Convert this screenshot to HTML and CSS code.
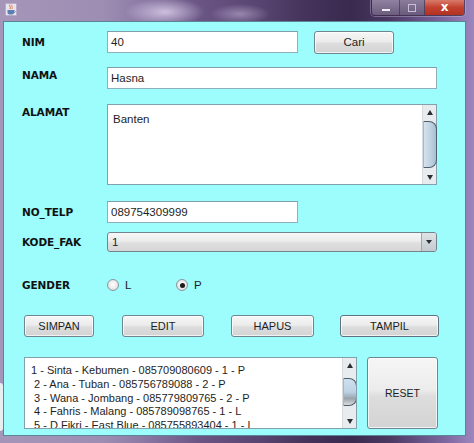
FILE: index.html
```html
<!DOCTYPE html>
<html>
<head>
<meta charset="utf-8">
<link rel="stylesheet" href="styles.css">
</head>
<body>
<div class="screen">
  <div class="titlebar">
    <div class="app-icon">
      <svg width="12" height="13" viewBox="0 0 12 13">
        <rect x="0.5" y="0.5" width="11" height="12" rx="1" fill="#e9e3ef" stroke="#b9abc8"/>
        <path d="M5 1.5 C3.5 3 6.5 4 5 6" stroke="#d9702a" stroke-width="1" fill="none"/>
        <path d="M7 2 C6 3.5 8 4.2 7 6" stroke="#d9702a" stroke-width="0.8" fill="none"/>
        <path d="M2.5 7 H9 V9.5 C9 11 8 11.5 5.8 11.5 C3.5 11.5 2.5 11 2.5 9.5 Z" fill="#5a7fb0"/>
        <path d="M9 7.6 C10.6 7.6 10.6 9.6 9 9.6" stroke="#5a7fb0" stroke-width="0.8" fill="none"/>
      </svg>
    </div>
    <div class="win-controls">
      <div class="wc wc-min"><span class="min-glyph"></span></div>
      <div class="wc wc-max"><span class="max-glyph"></span></div>
      <div class="wc wc-close">x</div>
    </div>
  </div>
  <div class="panel">
    <div class="row row-nim">
      <div class="label">NIM</div>
      <div class="field w-short">40</div>
      <div class="btn btn-cari">Cari</div>
    </div>
    <div class="row row-nama">
      <div class="label label-top">NAMA</div>
      <div class="field w-long">Hasna</div>
    </div>
    <div class="row row-alamat">
      <div class="label label-top">ALAMAT</div>
      <div class="textarea w-long">
        <div class="ta-text">Banten</div>
        <div class="scrollbar">
          <div class="sb-arrow"><span class="tri-up"></span></div>
          <div class="sb-track"><div class="sb-thumb thumb-alamat"></div></div>
          <div class="sb-arrow"><span class="tri-down"></span></div>
        </div>
      </div>
    </div>
    <div class="row row-telp">
      <div class="label">NO_TELP</div>
      <div class="field w-short">089754309999</div>
    </div>
    <div class="row row-fak">
      <div class="label">KODE_FAK</div>
      <div class="combo w-long">
        <div class="combo-text">1</div>
        <div class="combo-arrow"><span class="tri-down"></span></div>
      </div>
    </div>
    <div class="row row-gender">
      <div class="label">GENDER</div>
      <div class="radio-opt opt-l"><span class="radio"></span><span class="radio-text">L</span></div>
      <div class="radio-opt"><span class="radio checked"><span class="dot"></span></span><span class="radio-text">P</span></div>
    </div>
    <div class="row row-buttons">
      <div class="btn b-simpan">SIMPAN</div>
      <div class="btn b-edit">EDIT</div>
      <div class="btn b-hapus">HAPUS</div>
      <div class="btn b-tampil">TAMPIL</div>
    </div>
    <div class="row row-bottom">
      <div class="listbox">
        <div class="list-text">1 - Sinta - Kebumen - 085709080609 - 1 - P
 2 - Ana - Tuban - 085756789088 - 2 - P
 3 - Wana - Jombang - 085779809765 - 2 - P
 4 - Fahris - Malang - 085789098765 - 1 - L
 5 - D.Fikri - East Blue - 085755893404 - 1 - L</div>
        <div class="scrollbar">
          <div class="sb-arrow"><span class="tri-up"></span></div>
          <div class="sb-track"><div class="sb-thumb thumb-list"></div></div>
          <div class="sb-arrow"><span class="tri-down"></span></div>
        </div>
      </div>
      <div class="btn b-reset">RESET</div>
    </div>
  </div>
  <div class="behind"></div>
</div>
</body>
</html>
```
FILE: styles.css
```css
html, body {
  margin: 0;
  padding: 0;
}
body {
  width: 474px;
  height: 443px;
  overflow: hidden;
  font-family: "Liberation Sans", Arial, sans-serif;
}
.screen {
  position: relative;
  width: 474px;
  height: 443px;
  overflow: hidden;
  background:
    radial-gradient(ellipse 40px 14px at 165px 12px, rgba(230,220,245,0.75), rgba(230,220,245,0) 100%),
    radial-gradient(ellipse 30px 10px at 240px 14px, rgba(210,195,230,0.5), rgba(210,195,230,0) 100%),
    linear-gradient(90deg, #a596b9 0%, #9d8db2 22%, #8c79a5 30%, #6a5584 42%, #584470 55%, #44325a 65%, #3a2a4e 74%, #4a3862 82%, #7d67a0 94%, #9e86bd 100%);
}
.titlebar {
  height: 21px;
  display: flex;
  justify-content: space-between;
  align-items: flex-start;
}
.app-icon {
  margin: 2px 0 0 5px;
  width: 12px;
  height: 13px;
}
.win-controls {
  display: flex;
  margin-right: 9px;
  height: 15px;
  border: 1px solid rgba(60,40,70,0.7);
  border-top: none;
  border-radius: 0 0 4px 4px;
  overflow: hidden;
  box-shadow: 0 0 0 1px rgba(220,210,235,0.35);
}
.wc {
  height: 15px;
  display: flex;
  align-items: center;
  justify-content: center;
}
.wc-min {
  width: 27px;
  background: linear-gradient(#8f819f, #6c5d7f);
  border-right: 1px solid rgba(60,40,70,0.6);
}
.wc-max {
  width: 24px;
  background: linear-gradient(#8a7c9b, #6a5b7c);
  border-right: 1px solid rgba(60,40,70,0.6);
}
.wc-close {
  width: 39px;
  background: linear-gradient(#d97b6c, #c2402e 50%, #b23222);
  color: #fff;
  font: bold 12px "DejaVu Sans", sans-serif;
  line-height: 12px;
  padding-bottom: 2px;
  box-sizing: border-box;
}
.min-glyph {
  width: 8px;
  height: 2px;
  margin-top: 4px;
  background: #f2eef5;
}
.max-glyph {
  width: 6px;
  height: 6px;
  border: 1px solid #c9bfd5;
}
.panel {
  width: 463px;
  height: 415px;
  margin-left: 3px;
  box-sizing: border-box;
  border: 1px solid #5b8795;
  background: #9dfcfc;
  padding: 9px 0 0 18px;
  display: flex;
  flex-direction: column;
}
.row {
  display: flex;
  align-items: center;
}
.label {
  width: 85px;
  flex: none;
  font: bold 10.5px "DejaVu Sans", Verdana, sans-serif;
  color: #111;
  letter-spacing: -0.1px;
}
.row-nama, .row-alamat {
  align-items: flex-start;
}
.label-top {
  padding-top: 2px;
}
.row-nim { height: 22px; }
.row-nama { margin-top: 14px; }
.row-alamat { margin-top: 15px; }
.row-telp { margin-top: 16px; }
.row-fak { margin-top: 9px; }
.row-gender { margin-top: 27px; height: 12px; }
.row-buttons { margin-top: 24px; }
.row-bottom { margin-top: 20px; align-items: flex-start; }

.field {
  height: 22px;
  box-sizing: border-box;
  border: 1px solid #8fb0bb;
  border-top-color: #7f9ea9;
  background: #fff;
  padding: 0 3px;
  font-size: 11.5px;
  line-height: 20px;
  color: #1e1e1e;
}
.w-short { width: 191px; }
.w-long { width: 330px; }

.btn {
  box-sizing: border-box;
  height: 22px;
  border: 1px solid #6f8590;
  border-radius: 3px;
  background: linear-gradient(#f6f6f6 0%, #ececec 45%, #dddddd 55%, #d3d3d3 100%);
  box-shadow: inset 0 0 0 1px rgba(255,255,255,0.7);
  display: flex;
  align-items: center;
  justify-content: center;
  font-size: 11px;
  color: #1e1e1e;
}
.btn-cari {
  width: 80px;
  margin-left: 16px;
  height: 23px;
  font-size: 11.5px;
}

.textarea {
  height: 81px;
  box-sizing: border-box;
  border: 1px solid #82a1ac;
  background: #fff;
  display: flex;
}
.ta-text {
  flex: 1;
  padding: 7px 0 0 5px;
  font-size: 11.5px;
  line-height: 14px;
  color: #1e1e1e;
}
.scrollbar {
  width: 14px;
  flex: none;
  display: flex;
  flex-direction: column;
  background: #e9ecee;
  border-left: 1px solid #d7dbde;
  box-sizing: border-box;
}
.sb-arrow {
  height: 14px;
  flex: none;
  display: flex;
  align-items: center;
  justify-content: center;
}
.sb-track {
  flex: 1;
  position: relative;
}
.sb-thumb {
  position: absolute;
  left: 0;
  right: -1px;
  border: 1px solid #4d5f6d;
  border-radius: 0 8px 8px 0;
  border-left-color: #a9b8c4;
  background: linear-gradient(90deg, #d5e2ec, #bcd0e0 60%, #a8bfd2);
}
.thumb-alamat {
  top: 2px;
  bottom: 2px;
}
.thumb-list {
  top: 6px;
  bottom: 8px;
  background: linear-gradient(#cfe0ee 0%, #bcd2e4 50%, #9aa4ab 75%, #d8dcdf 100%);
}
.tri-up {
  width: 0;
  height: 0;
  border-left: 3px solid transparent;
  border-right: 3px solid transparent;
  border-bottom: 5px solid #2a2f35;
}
.tri-down {
  width: 0;
  height: 0;
  border-left: 3px solid transparent;
  border-right: 3px solid transparent;
  border-top: 5px solid #2a2f35;
}

.combo {
  height: 20px;
  box-sizing: border-box;
  border: 1px solid #72858f;
  border-radius: 3px;
  background: linear-gradient(#f7f7f7 0%, #ececec 45%, #dfdfdf 55%, #d6d6d6 100%);
  display: flex;
  overflow: hidden;
}
.combo-text {
  flex: 1;
  padding-left: 4px;
  font-size: 11.5px;
  line-height: 18px;
  color: #1e1e1e;
}
.combo-arrow {
  width: 14px;
  border-left: 1px solid #9aa7ae;
  background: linear-gradient(#dfe3e6, #c4cacf);
  display: flex;
  align-items: center;
  justify-content: center;
}
.combo-arrow .tri-down {
  border-left-width: 3px;
  border-right-width: 3px;
  border-top-width: 4px;
}

.radio-opt {
  display: flex;
  align-items: center;
  height: 12px;
}
.opt-l {
  width: 69px;
}
.radio {
  width: 12px;
  height: 12px;
  box-sizing: border-box;
  border-radius: 50%;
  border: 1px solid #8b979f;
  background: radial-gradient(circle at 50% 45%, #ffffff 0%, #eeeeee 45%, #cfcfcf 100%);
  display: flex;
  align-items: center;
  justify-content: center;
}
.dot {
  width: 5px;
  height: 5px;
  border-radius: 50%;
  background: #1a1a1a;
}
.radio-text {
  margin-left: 6px;
  font-size: 11.5px;
  color: #1e1e1e;
}

.b-simpan { width: 70px; margin-left: 2px; }
.b-edit { width: 82px; margin-left: 28px; }
.b-hapus { width: 83px; margin-left: 27px; }
.b-tampil { width: 99px; margin-left: 26px; border-color: #5d7480; }

.listbox {
  width: 333px;
  height: 72px;
  margin-left: 2px;
  box-sizing: border-box;
  border: 1px solid #82a1ac;
  background: #fff;
  display: flex;
  overflow: hidden;
}
.list-text {
  flex: 1;
  white-space: pre;
  overflow: hidden;
  padding: 6px 0 0 6px;
  font-size: 11px;
  line-height: 13.75px;
  color: #1e1e1e;
}
.b-reset {
  width: 71px;
  height: 72px;
  margin-left: 10px;
  font-size: 10.5px;
}
.behind {
  position: absolute;
  left: 0;
  top: 383px;
  width: 3px;
  height: 48px;
  background: #e8eef0;
  border-radius: 0 3px 3px 0;
}
```
